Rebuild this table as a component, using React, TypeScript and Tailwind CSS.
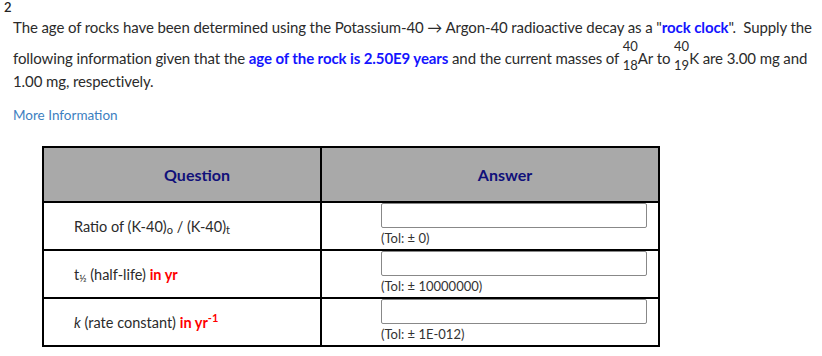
import React from "react";

function Nuclide({ mass, num, sym }: { mass: string; num: string; sym: string }) {
  return (
    <>
      <span className="relative top-[6px] text-[13px] tracking-normal">
        {num}
        <span className="absolute left-0 -top-[17px] leading-none">{mass}</span>
      </span>
      {sym}
    </>
  );
}

const rows = [
  {
    q: (
      <>
        Ratio of (K-40)<sub className="text-[11px]">o</sub> / (K-40)<sub className="text-[11px]">t</sub>
      </>
    ),
    tol: "(Tol: ± 0)",
  },
  {
    q: (
      <>
        t<sub className="text-[10px]">½</sub> (half-life) <b className="text-[#ff0000]">in yr</b>
      </>
    ),
    tol: "(Tol: ± 10000000)",
  },
  {
    q: (
      <>
        <i>k</i> (rate constant){" "}
        <b className="text-[#ff0000]">
          in yr<sup className="text-[11px]">-1</sup>
        </b>
      </>
    ),
    tol: "(Tol: ± 1E-012)",
  },
];

export default function App() {
  return (
    <div className="w-[822px] h-[356px] bg-white text-[#2b2b2b] font-['Lato',sans-serif] relative overflow-hidden">
      <div className="pl-[4px] h-[16px] text-[13px] leading-[14px] font-semibold text-[#222]">2</div>
      <div className="pl-[13px] text-[15px] tracking-[-0.1px] whitespace-nowrap">
        <div className="h-[22px] leading-[22px]">
          The age of rocks have been determined using the Potassium-40 → Argon-40 radioactive decay as a "
          <b className="text-[#1414ff]">rock clock</b>".&nbsp; Supply the
        </div>
        <div className="h-[22px] leading-[22px] mt-[9px]">
          following information given that the{" "}
          <b className="text-[#1414ff]">age of the rock is 2.50E9 years</b> and the current masses of{" "}
          <Nuclide mass="40" num="18" sym="Ar" /> to <Nuclide mass="40" num="19" sym="K" /> are 3.00 mg and
        </div>
        <div className="h-[22px] leading-[22px] mt-[1px]">1.00 mg, respectively.</div>
        <div className="mt-[14px] text-[13.5px] leading-[18px] tracking-normal text-[#3d7fc1]">More Information</div>
      </div>

      <table className="absolute left-[42px] top-[146px] w-[618px] border-collapse border-2 border-black">
        <thead>
          <tr className="bg-[#a9a9a9] h-[55px] text-[16px]">
            <th className="w-[278px] border-2 border-black pl-[30px] font-bold text-[#10107a]">Question</th>
            <th className="border-2 border-black pl-[30px] font-bold text-[#10107a]">Answer</th>
          </tr>
        </thead>
        <tbody>
          {rows.map((r, i) => (
            <tr key={i} className="h-[48px]">
              <td className="border-2 border-black pl-[30px] align-middle pt-[1px] text-[14.5px]">{r.q}</td>
              <td className="border-2 border-black pl-[59px] align-top">
                <div className="w-[266px] h-[25px] border border-[#888] rounded-[2px]" />
                <div className="text-[13px] leading-[16px] mt-[2px] text-[#333]">{r.tol}</div>
              </td>
            </tr>
          ))}
        </tbody>
      </table>
    </div>
  );
}
